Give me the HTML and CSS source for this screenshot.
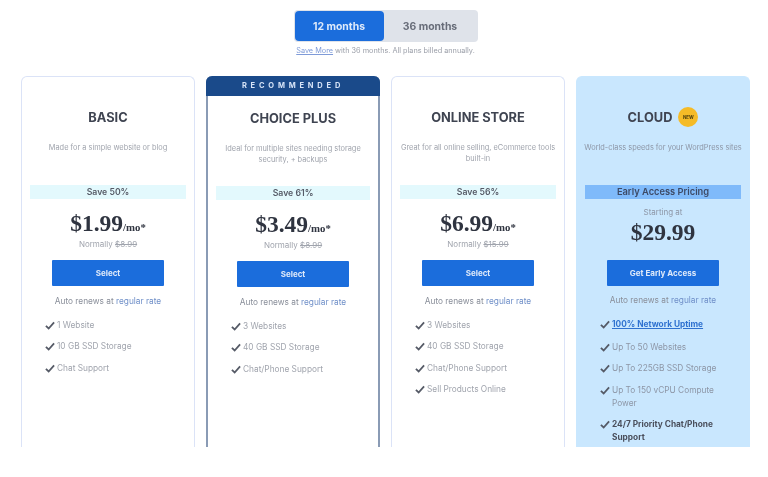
FILE: index.html
```html
<!DOCTYPE html>
<html lang="en">

<head>
    <meta charset="UTF-8">
    <meta name="viewport" content="width=device-width, initial-scale=1.0">
    <title>Hosting plans</title>
    <link rel="stylesheet" href="styles.css">
</head>

<body>
    <svg class="defs" width="0" height="0">
        <symbol id="check" viewBox="0 0 11 9">
            <path d="M1 5l3 2.8L10 1" fill="none" stroke="currentColor" stroke-width="2" />
        </symbol>
    </svg>
    <div class="page">
        <div class="term">
            <div class="toggle">
                <div class="toggle-item active">12 months</div>
                <div class="toggle-item">36 months</div>
            </div>
            <p class="term-note"><a href="#">Save More</a> with 36 months. All plans billed annually.</p>
        </div>

        <div class="plans">
            <div class="plan">
                <h2 class="name">BASIC</h2>
                <p class="desc">Made for a simple website or blog</p>
                <div class="save">Save 50%</div>
                <div class="price">$1.99<span class="per">/mo*</span></div>
                <div class="normal">Normally <s>$8.99</s></div>
                <button class="select">Select</button>
                <div class="renew">Auto renews at <a href="#">regular rate</a></div>
                <ul class="features">
                    <li><svg class="tick"><use href="#check" /></svg>1 Website</li>
                    <li><svg class="tick"><use href="#check" /></svg>10 GB SSD Storage</li>
                    <li><svg class="tick"><use href="#check" /></svg>Chat Support</li>
                </ul>
            </div>

            <div class="plan recommended">
                <div class="flag">RECOMMENDED</div>
                <h2 class="name">CHOICE PLUS</h2>
                <p class="desc">Ideal for multiple sites needing storage security, + backups</p>
                <div class="save">Save 61%</div>
                <div class="price">$3.49<span class="per">/mo*</span></div>
                <div class="normal">Normally <s>$8.99</s></div>
                <button class="select">Select</button>
                <div class="renew">Auto renews at <a href="#">regular rate</a></div>
                <ul class="features">
                    <li><svg class="tick"><use href="#check" /></svg>3 Websites</li>
                    <li><svg class="tick"><use href="#check" /></svg>40 GB SSD Storage</li>
                    <li><svg class="tick"><use href="#check" /></svg>Chat/Phone Support</li>
                </ul>
            </div>

            <div class="plan">
                <h2 class="name">ONLINE STORE</h2>
                <p class="desc">Great for all online selling, eCommerce tools built-in</p>
                <div class="save">Save 56%</div>
                <div class="price">$6.99<span class="per">/mo*</span></div>
                <div class="normal">Normally <s>$15.99</s></div>
                <button class="select">Select</button>
                <div class="renew">Auto renews at <a href="#">regular rate</a></div>
                <ul class="features">
                    <li><svg class="tick"><use href="#check" /></svg>3 Websites</li>
                    <li><svg class="tick"><use href="#check" /></svg>40 GB SSD Storage</li>
                    <li><svg class="tick"><use href="#check" /></svg>Chat/Phone Support</li>
                    <li><svg class="tick"><use href="#check" /></svg>Sell Products Online</li>
                </ul>
            </div>

            <div class="plan cloud">
                <h2 class="name">CLOUD <span class="new">NEW</span></h2>
                <p class="desc">World-class speeds for your WordPress sites</p>
                <div class="save">Early Access Pricing</div>
                <div class="starting">Starting at</div>
                <div class="price">$29.99</div>
                <button class="select">Get Early Access</button>
                <div class="renew">Auto renews at <a href="#">regular rate</a></div>
                <ul class="features">
                    <li class="uptime"><svg class="tick"><use href="#check" /></svg><a href="#">100% Network Uptime</a></li>
                    <li><svg class="tick"><use href="#check" /></svg>Up To 50 Websites</li>
                    <li><svg class="tick"><use href="#check" /></svg>Up To 225GB SSD Storage</li>
                    <li><svg class="tick"><use href="#check" /></svg>Up To 150 vCPU Compute Power</li>
                    <li class="strong"><svg class="tick"><use href="#check" /></svg>24/7 Priority Chat/Phone Support</li>
                </ul>
            </div>
        </div>
    </div>
</body>

</html>
```

FILE: styles.css
```css
* {
    box-sizing: border-box;
}

body {
    margin: 0;
    background-color: #fff;
    color: #4a4f5c;
    font-family: "Inter", "Open Sans", sans-serif;
}

.defs {
    display: block;
}

.page {
    height: 447px;
    overflow: hidden;
    padding: 10px 18px 0 21px;
    filter: blur(0.5px);
}

.term {
    display: flex;
    flex-direction: column;
    align-items: center;
    height: 66px;
}

.toggle {
    display: flex;
    width: 184px;
    height: 32px;
    padding: 1px;
    background-color: #dfe3ea;
    border-radius: 4px;
}

.toggle-item {
    flex: 1;
    display: flex;
    justify-content: center;
    align-items: center;
    font-size: 10.4px;
    font-weight: 700;
    color: #676c78;
    border-radius: 4px;
}

.toggle-item.active {
    flex: 0 0 89px;
    background-color: #1b6ddc;
    color: #dfeafa;
}

.term-note {
    margin: 4px 0 0;
    font-size: 7.3px;
    line-height: 9px;
    white-space: nowrap;
    color: #9a9ea8;
}

.term-note a {
    color: #7f9bd8;
}

.plans {
    display: grid;
    grid-template-columns: repeat(4, 174px);
    gap: 11px;
}

.plan {
    height: 400px;
    padding: 0 8px;
    border: 1px solid #dbe3f7;
    border-bottom: 0;
    border-radius: 6px 6px 0 0;
    background-color: #fff;
    text-align: center;
}

.name {
    display: flex;
    justify-content: center;
    align-items: center;
    gap: 6px;
    height: 20px;
    margin: 30px 0 0;
    font-size: 12.8px;
    font-weight: 700;
    color: #3f4451;
}

.flag {
    height: 20px;
    margin: 0 -10px;
    background-color: #1a4a8a;
    border-radius: 6px 6px 0 0;
    color: #d5e3f7;
    font-size: 7.5px;
    font-weight: 700;
    letter-spacing: 3.8px;
    line-height: 20px;
}

.recommended {
    border: 1px solid #8a9bb5;
    border-top: 0;
    border-left-width: 2px;
    border-right-width: 2px;
}

.recommended .name {
    margin-top: 12px;
}

.new {
    display: flex;
    justify-content: center;
    align-items: center;
    width: 20px;
    height: 20px;
    border-radius: 50%;
    background-color: #f5bb27;
    color: #5c4a10;
    font-size: 4.5px;
    font-weight: 800;
}

.desc {
    height: 42px;
    margin: 16px -4px 0;
    font-size: 7.4px;
    line-height: 10.5px;
    color: #a0a4ad;
}

.save {
    height: 14px;
    background-color: #e3f9fd;
    font-size: 8.7px;
    font-weight: 600;
    line-height: 14px;
    color: #555a66;
}

.price {
    margin-top: 11px;
    height: 26px;
    font-family: "Liberation Serif", serif;
    font-size: 23.5px;
    font-weight: 700;
    line-height: 26px;
    color: #2f3440;
}

.per {
    font-size: 10.8px;
}

.normal {
    height: 10px;
    margin-top: 3px;
    font-size: 8px;
    line-height: 10px;
    color: #a0a4ad;
}

.select {
    display: block;
    width: 112px;
    height: 26px;
    margin: 11px auto 0;
    padding: 0;
    border: 0;
    border-radius: 1px;
    background-color: #1b6ddc;
    color: #dfeafa;
    font-family: inherit;
    font-size: 8px;
    font-weight: 700;
}

.renew {
    margin-top: 10px;
    font-size: 8.3px;
    line-height: 10px;
    color: #8a8f9a;
}

.renew a {
    color: #6f8fc8;
    text-decoration: none;
}

.features {
    margin: 13px 0 0;
    padding: 0 0 0 15px;
    list-style: none;
    text-align: left;
    font-size: 8.3px;
    line-height: 13px;
    color: #a0a4ad;
}

.features li {
    display: flex;
    margin-bottom: 8.3px;
    padding-right: 6px;
}

.tick {
    flex: none;
    width: 10px;
    height: 9px;
    margin: 2px 2px 0 0;
    color: #555a66;
}

.cloud {
    border-color: #c9e7fe;
    background-color: #c9e7fe;
}

.cloud .save {
    background-color: #7fbafa;
    font-size: 9.3px;
    color: #3d4a66;
}

.cloud .desc,
.cloud .features,
.cloud .starting {
    color: #8d96a6;
}

.starting {
    margin-top: 8px;
    font-size: 8px;
    line-height: 10px;
}

.cloud .price {
    margin-top: 2px;
}

.cloud .select {
    margin-top: 15px;
}

.cloud .renew {
    margin-top: 9px;
}

.features .uptime {
    margin-bottom: 10px;
}

.uptime a {
    color: #2f72d0;
    font-weight: 700;
}

.features .strong {
    color: #4a4f5c;
    font-weight: 700;
}
```
